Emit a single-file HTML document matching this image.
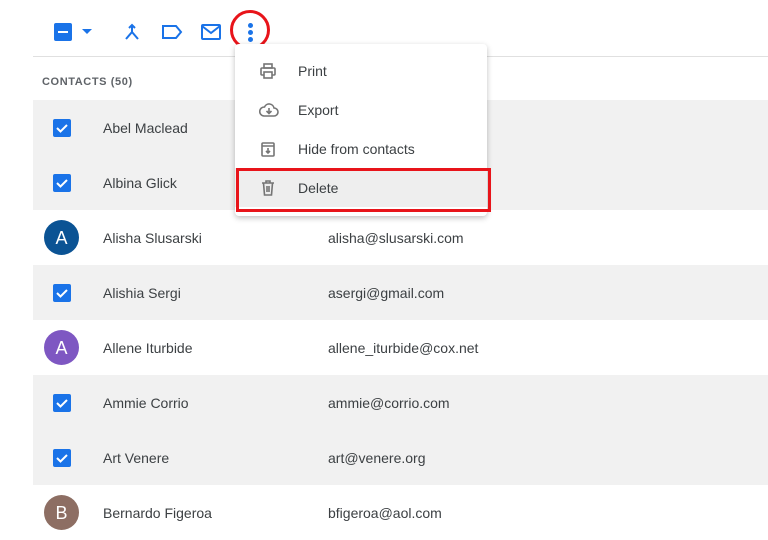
<!DOCTYPE html><html><head><style>
body{margin:0;width:768px;height:535px;overflow:hidden;background:#fff;font-family:"Liberation Sans",sans-serif;position:relative}
.a{position:absolute}
.row{position:absolute;left:33px;width:735px;height:55px}
.g{background:#f1f1f1}
.cb{position:absolute;left:20px;top:19px;width:18px;height:18px;background:#1a73e8;border-radius:2px}
.av{position:absolute;left:11px;top:10px;width:35px;height:35px;border-radius:50%;color:#fff;font-size:18px;text-align:center;line-height:36px}
.nm{position:absolute;left:70px;top:20px;font-size:14px;color:#3c4043}
.em{position:absolute;left:295px;top:20px;font-size:14px;color:#3c4043}
.mi{position:absolute;left:0;width:252px;height:39px}
.mi span{position:absolute;left:63px;top:12px;font-size:14px;color:#3c4043}
.mi svg{position:absolute;left:24px;top:11px}
</style></head><body>
<div class="a" style="left:54px;top:23px;width:18px;height:18px;background:#1a73e8;border-radius:2px"><div class="a" style="left:4px;top:8px;width:10px;height:2px;background:#fff"></div></div>
<div class="a" style="left:82px;top:29px;width:0;height:0;border-left:5px solid transparent;border-right:5px solid transparent;border-top:5px solid #1a73e8"></div>
<svg class="a" style="left:122px;top:22px" width="20" height="20" viewBox="0 0 20 20" fill="none" stroke="#1a73e8" stroke-width="2"><path d="M10 3v7L4 17M10 10l6 7M7 6l3-3 3 3"/></svg>
<svg class="a" style="left:161px;top:23px" width="22" height="18" viewBox="0 0 22 18" fill="none" stroke="#1a73e8" stroke-width="2"><path d="M2 3h13l5 6-5 6H2z"/></svg>
<svg class="a" style="left:200px;top:23px" width="22" height="18" viewBox="0 0 22 18" fill="none" stroke="#1a73e8" stroke-width="2"><rect x="2" y="2" width="18" height="14" rx="1"/><path d="M2 3l9 7 9-7"/></svg>
<div class="a" style="left:248px;top:23px;width:5px;height:5px;border-radius:50%;background:#1a73e8"></div>
<div class="a" style="left:248px;top:30px;width:5px;height:5px;border-radius:50%;background:#1a73e8"></div>
<div class="a" style="left:248px;top:37px;width:5px;height:5px;border-radius:50%;background:#1a73e8"></div>
<div class="a" style="left:230px;top:10px;width:40px;height:40px;border:3px solid #e8141a;border-radius:50%;box-sizing:border-box"></div>
<div class="a" style="left:33px;top:56px;width:735px;height:1px;background:#e0e0e0"></div>
<div class="a" style="left:42px;top:76px;font-size:11px;font-weight:bold;color:#5f6368;letter-spacing:.6px">CONTACTS (50)</div>

<div class="row g" style="top:100px"><div class="cb"><svg width="18" height="18"><path d="M4 9l3.5 3.5L14 6" stroke="#fff" stroke-width="2" fill="none"/></svg></div><div class="nm">Abel Maclead</div></div>
<div class="row g" style="top:155px"><div class="cb"><svg width="18" height="18"><path d="M4 9l3.5 3.5L14 6" stroke="#fff" stroke-width="2" fill="none"/></svg></div><div class="nm">Albina Glick</div></div>
<div class="row" style="top:210px"><div class="av" style="background:#0b5394">A</div><div class="nm">Alisha Slusarski</div><div class="em">alisha@slusarski.com</div></div>
<div class="row g" style="top:265px"><div class="cb"><svg width="18" height="18"><path d="M4 9l3.5 3.5L14 6" stroke="#fff" stroke-width="2" fill="none"/></svg></div><div class="nm">Alishia Sergi</div><div class="em">asergi@gmail.com</div></div>
<div class="row" style="top:320px"><div class="av" style="background:#7e57c2">A</div><div class="nm">Allene Iturbide</div><div class="em">allene_iturbide@cox.net</div></div>
<div class="row g" style="top:375px"><div class="cb"><svg width="18" height="18"><path d="M4 9l3.5 3.5L14 6" stroke="#fff" stroke-width="2" fill="none"/></svg></div><div class="nm">Ammie Corrio</div><div class="em">ammie@corrio.com</div></div>
<div class="row g" style="top:430px"><div class="cb"><svg width="18" height="18"><path d="M4 9l3.5 3.5L14 6" stroke="#fff" stroke-width="2" fill="none"/></svg></div><div class="nm">Art Venere</div><div class="em">art@venere.org</div></div>
<div class="row" style="top:485px"><div class="av" style="background:#8d6e63">B</div><div class="nm">Bernardo Figeroa</div><div class="em">bfigeroa@aol.com</div></div>

<div class="a" style="left:235px;top:44px;width:252px;height:172px;background:#fff;box-shadow:0 2px 6px rgba(0,0,0,.25);border-radius:4px">
<div class="mi" style="top:7px"><svg width="18" height="18" viewBox="0 0 18 18" fill="none" stroke="#757575" stroke-width="1.6"><rect x="2" y="6" width="14" height="7" rx="1"/><rect x="5" y="2" width="8" height="4"/><rect x="5" y="10" width="8" height="6" fill="#fff"/></svg><span>Print</span></div>
<div class="mi" style="top:46px"><svg width="20" height="18" viewBox="0 0 20 18" fill="none" stroke="#757575" stroke-width="1.6"><path d="M5 15h10a4 4 0 0 0 0-8 5 5 0 0 0-9.5-1A4.5 4.5 0 0 0 5 15z"/><path d="M10 7v5M7.5 10l2.5 2.5 2.5-2.5"/></svg><span>Export</span></div>
<div class="mi" style="top:85px"><svg width="18" height="18" viewBox="0 0 18 18" fill="none" stroke="#757575" stroke-width="1.6"><rect x="3" y="3" width="12" height="13" rx="1"/><path d="M3 6h12M9 8v5M7 11l2 2 2-2"/></svg><span>Hide from contacts</span></div>
<div class="mi" style="top:124px;background:#eeeeee"><svg width="18" height="18" viewBox="0 0 18 18" fill="none" stroke="#757575" stroke-width="1.6"><path d="M3 4h12M7 4V2h4v2M4.5 4l1 12h7l1-12M8 7v6M10 7v6"/></svg><span>Delete</span></div>
</div>
<div class="a" style="left:236px;top:168px;width:255px;height:44px;border:3px solid #e8141a;box-sizing:border-box"></div>
</body></html>
